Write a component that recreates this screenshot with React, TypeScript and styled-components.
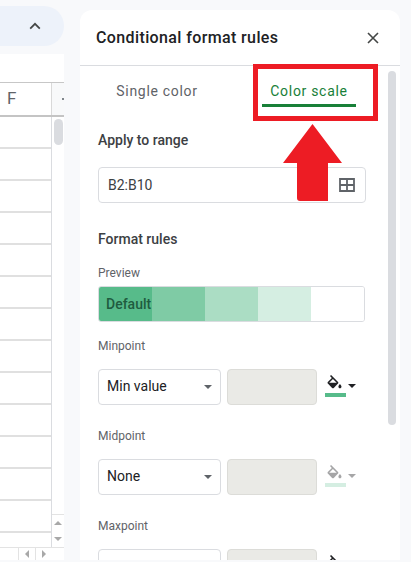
import React from 'react'
import styled, { createGlobalStyle } from 'styled-components'

const ROW_COUNT = 13

const Global = createGlobalStyle`
html, body {
  margin: 0;
  padding: 0;
  height: 562px;
  overflow: hidden;
  background: #f8f9fb;
  font-family: Roboto, "Liberation Sans", sans-serif;
}
`

const FillIcon = ({ color, muted }: { color: string; muted?: boolean }) => (
  <FillButton $muted={muted}>
    <svg width="19" height="14" viewBox="0 0 24 18">
      <path
        d="M16.56 8.94L7.62 0 6.21 1.41l2.38 2.38-5.15 5.15c-.59.59-.59 1.54 0 2.12l5.5 5.5c.29.29.68.44 1.06.44s.77-.15 1.06-.44l5.5-5.5c.59-.58.59-1.53 0-2.12zM5.21 10L10 5.21 14.79 10H5.21zM19 11.5s-2 2.17-2 3.5c0 1.1.9 2 2 2s2-.9 2-2c0-1.33-2-3.5-2-3.5z"
        fill="#202124"
      />
    </svg>
    <FillCaret />
    <ColorBar $color={color} />
  </FillButton>
)

const PointRow = ({ value, color, muted }: { value: string; color: string; muted?: boolean }) => (
  <Row>
    <SelectBox>
      {value}
      <Caret />
    </SelectBox>
    <Swatch />
    <FillIcon color={color} muted={muted} />
  </Row>
)

const App = () => {
  return (
    <Stage>
      <Global />
      <Sheet>
        <Pill>
          <svg width="12" height="8" viewBox="0 0 12 8">
            <path d="M1.2 6.600 L6 1.800 L10.800 6.600" fill="none" stroke="#444746" strokeWidth="1.8" />
          </svg>
        </Pill>
        <SheetBody>
          <ColumnHeader>
            <ColumnCell>F</ColumnCell>
            <HeaderGutter>
              <Tick />
            </HeaderGutter>
          </ColumnHeader>
          <GridArea>
            <Rows>
              {Array.from({ length: ROW_COUNT }).map((_, i) => (
                <GridRow key={i} />
              ))}
            </Rows>
            <VScroll>
              <VThumb />
              <ScrollButtons>
                <ScrollBtn><MiniArrow $dir="up" /></ScrollBtn>
                <ScrollBtn><MiniArrow $dir="down" /></ScrollBtn>
              </ScrollButtons>
            </VScroll>
          </GridArea>
          <HScroll>
            <HBtn><MiniArrow $dir="left" /></HBtn>
            <HBtn><MiniArrow $dir="right" /></HBtn>
          </HScroll>
        </SheetBody>
      </Sheet>

      <Panel>
        <PanelHeader>
          <Title>Conditional format rules</Title>
          <svg width="12" height="12" viewBox="0 0 12 12">
            <path d="M1 1 L11 11 M11 1 L1 11" stroke="#444746" strokeWidth="1.6" />
          </svg>
        </PanelHeader>
        <PanelMain>
          <PanelContent>
            <Tabs>
              <Tab>Single color</Tab>
              <Tab $active>Color scale</Tab>
            </Tabs>
            <SectionTitle>Apply to range</SectionTitle>
            <RangeInput>
              B2:B10
              <svg width="16" height="14" viewBox="0 0 16 14">
                <path d="M1 1 H15 V13 H1 Z M8 1 V13 M1 7 H15" fill="none" stroke="#5f6368" strokeWidth="1.8" />
              </svg>
            </RangeInput>
            <SectionTitle $top={28}>Format rules</SectionTitle>
            <FieldLabel $top={18}>Preview</FieldLabel>
            <PreviewBar>
              <PreviewStep $bg="#57bb8a"><DefaultText>Default</DefaultText></PreviewStep>
              <PreviewStep $bg="#7fcba5" />
              <PreviewStep $bg="#abddc4" />
              <PreviewStep $bg="#d5eee2" />
              <PreviewStep $bg="#ffffff" />
            </PreviewBar>
            <FieldLabel $top={17}>Minpoint</FieldLabel>
            <PointRow value="Min value" color="#57bb8a" />
            <FieldLabel $top={24}>Midpoint</FieldLabel>
            <PointRow value="None" color="#d5eee2" muted />
            <FieldLabel $top={24}>Maxpoint</FieldLabel>
            <PointRow value="" color="#ffffff" />
          </PanelContent>
          <PanelScroll>
            <PanelThumb />
          </PanelScroll>
        </PanelMain>
      </Panel>

      <Callout />
      <CalloutArrow width="60" height="78" viewBox="0 0 60 78">
        <path d="M29.500 0 L59 39 L45 39 L45 77 L17 77 Q14 77 14 74 L14 39 L0 39 Z" fill="#ed1c24" />
      </CalloutArrow>
    </Stage>
  )
}

export default App

const Stage = styled.div`
position: relative;
width: 411px;
height: 562px;
display: flex;
gap: 16px;
overflow: hidden;
box-sizing: border-box;
`

const Sheet = styled.div`
width: 64px;
height: 560px;
flex: none;
display: flex;
flex-direction: column;
`

const Pill = styled.div`
height: 40px;
margin-top: 6px;
background: #edf2fa;
border-radius: 0 20px 20px 0;
display: flex;
align-items: center;
justify-content: flex-end;
padding-right: 23px;
`

const SheetBody = styled.div`
flex: 1;
min-height: 0;
margin-top: 8px;
padding-top: 28px;
background: #ffffff;
display: flex;
flex-direction: column;
`

const ColumnHeader = styled.div`
height: 35px;
flex: none;
display: flex;
border-top: 1px solid #c7c7c7;
box-sizing: border-box;
border-bottom: 2px solid #c4c4c4;
`

const ColumnCell = styled.div`
width: 52px;
box-sizing: border-box;
border-right: 1px solid #d9d9d9;
padding-left: 7px;
font-size: 17px;
line-height: 31px;
color: #5f6368;
`

const HeaderGutter = styled.div`
flex: 1;
background: #f8f9fa;
display: flex;
align-items: center;
justify-content: flex-end;
`

const Tick = styled.div`
width: 2px;
height: 2px;
background: #80868b;
`

const GridArea = styled.div`
flex: 1;
display: flex;
min-height: 0;
`

const Rows = styled.div`
width: 52px;
border-right: 1px solid #dadce0;
box-sizing: border-box;
overflow: hidden;
`

const GridRow = styled.div`
height: 32px;
box-sizing: border-box;
border-bottom: 2px solid #e0e0e0;
`

const VScroll = styled.div`
flex: 1;
display: flex;
flex-direction: column;
justify-content: space-between;
background: #ffffff;
padding-top: 2px;
`

const VThumb = styled.div`
width: 9px;
height: 26px;
margin-left: 2px;
background: #dadce0;
border-radius: 5px;
`

const ScrollButtons = styled.div`
border-top: 1px solid #e3e3e3;
`

const ScrollBtn = styled.div`
height: 16px;
display: flex;
align-items: center;
justify-content: center;
`

const MiniArrow = styled.div<{ $dir: 'up' | 'down' | 'left' | 'right' }>`
width: 0;
height: 0;
${({ $dir }) =>
  $dir === 'up' || $dir === 'down'
    ? `border-left: 4px solid transparent; border-right: 4px solid transparent;`
    : `border-top: 4px solid transparent; border-bottom: 4px solid transparent;`}
${({ $dir }) => $dir === 'up' && 'border-bottom: 4px solid #a8a8a8;'}
${({ $dir }) => $dir === 'down' && 'border-top: 4px solid #a8a8a8;'}
${({ $dir }) => $dir === 'left' && 'border-right: 4px solid #a8a8a8;'}
${({ $dir }) => $dir === 'right' && 'border-left: 4px solid #a8a8a8;'}
`

const HScroll = styled.div`
height: 12px;
flex: none;
display: flex;
justify-content: flex-end;
padding-right: 12px;
border-top: 1px solid #e3e3e3;
`

const HBtn = styled.div`
width: 16px;
border-left: 1px solid #e3e3e3;
display: flex;
align-items: center;
justify-content: center;
`

const Panel = styled.div`
width: 320px;
height: 550px;
flex: none;
margin-top: 10px;
background: #ffffff;
border-radius: 12px 12px 0 0;
display: flex;
flex-direction: column;
overflow: hidden;
`

const PanelHeader = styled.div`
height: 56px;
flex: none;
box-sizing: border-box;
border-bottom: 1px solid #dadce0;
display: flex;
align-items: center;
justify-content: space-between;
padding: 0 21px 0 16px;
`

const Title = styled.h2`
margin: 0;
font-size: 16px;
font-weight: 500;
letter-spacing: 0.38px;
color: #202124;
`

const PanelMain = styled.div`
flex: 1;
min-height: 0;
display: flex;
`

const PanelContent = styled.div`
width: 308px;
flex: none;
box-sizing: border-box;
padding: 0 0 0 18px;
overflow: hidden;
`

const Tabs = styled.div`
height: 41px;
display: flex;
`

const Tab = styled.div<{ $active?: boolean }>`
width: ${({ $active }) => ($active ? '94px' : '102px')};
margin-left: ${({ $active }) => ($active ? '54px' : '8px')};
height: 41px;
box-sizing: border-box;
text-align: center;
padding-top: 17px;
font-size: 14px;
font-weight: 400;
letter-spacing: 0.7px;
white-space: nowrap;
color: ${({ $active }) => ($active ? '#188038' : '#5f6368')};
border-bottom: 3px solid ${({ $active }) => ($active ? '#188038' : 'transparent')};
`

const SectionTitle = styled.div<{ $top?: number }>`
margin-top: ${({ $top }) => $top ?? 25}px;
font-size: 14px;
line-height: 17px;
font-weight: 500;
color: #3c4043;
`

const RangeInput = styled.div`
width: 268px;
height: 36px;
margin-top: 18px;
box-sizing: border-box;
border: 1px solid #dadce0;
border-radius: 4px;
display: flex;
align-items: center;
justify-content: space-between;
padding: 0 10px 0 9px;
font-size: 14px;
color: #3c4043;
`

const FieldLabel = styled.div<{ $top: number }>`
margin-top: ${({ $top }) => $top}px;
font-size: 12px;
line-height: 15px;
color: #5f6368;
`

const PreviewBar = styled.div`
width: 267px;
height: 36px;
margin-top: 5px;
box-sizing: border-box;
border: 1px solid #dadce0;
border-radius: 3px;
display: flex;
overflow: hidden;
`

const PreviewStep = styled.div<{ $bg: string }>`
flex: 1;
background: ${({ $bg }) => $bg};
display: flex;
align-items: center;
`

const DefaultText = styled.span`
padding-left: 7px;
font-size: 14px;
font-weight: 500;
color: #1f5c40;
`

const Row = styled.div`
display: flex;
align-items: center;
margin-top: 15px;
height: 36px;
`

const SelectBox = styled.div`
width: 123px;
height: 36px;
flex: none;
box-sizing: border-box;
border: 1px solid #dadce0;
border-radius: 4px;
display: flex;
align-items: center;
justify-content: space-between;
padding: 0 8px 2px;
font-size: 14px;
color: #202124;
`

const Caret = styled.span`
width: 0;
height: 0;
margin-top: 2px;
border-left: 4px solid transparent;
border-right: 4px solid transparent;
border-top: 4px solid #5f6368;
`

const FillCaret = styled(Caret)`
align-self: end;
margin-bottom: 1px;
border-top-color: #202124;
`

const Swatch = styled.div`
width: 90px;
height: 36px;
flex: none;
margin-left: 6px;
box-sizing: border-box;
border: 1px solid #dcdcd8;
border-radius: 4px;
background: #eaeae6;
`

const FillButton = styled.div<{ $muted?: boolean }>`
margin-left: 8px;
margin-bottom: 2px;
display: grid;
grid-template-columns: 23px 8px;
row-gap: 4px;
svg {
  display: block;
}
svg, ${FillCaret} {
  opacity: ${({ $muted }) => ($muted ? 0.4 : 1)};
}
`

const ColorBar = styled.div<{ $color: string }>`
grid-column: 1;
width: 21px;
height: 4px;
background: ${({ $color }) => $color};
`

const PanelScroll = styled.div`
flex: 1;
padding-top: 5px;
`

const PanelThumb = styled.div`
width: 8px;
height: 354px;
background: #dadce0;
border-radius: 4px;
`

const Callout = styled.div`
position: absolute;
left: 253px;
top: 64px;
width: 125px;
height: 57px;
box-sizing: border-box;
border: 5px solid #ed1c24;
`

const CalloutArrow = styled.svg`
position: absolute;
left: 283px;
top: 124px;
`
